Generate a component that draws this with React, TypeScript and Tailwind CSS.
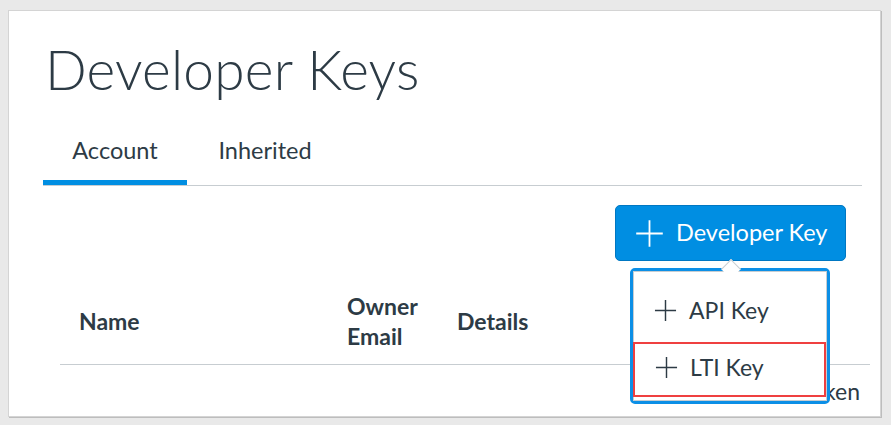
import React from "react";

const Plus = ({ size, stroke, className }: { size: number; stroke: string; className?: string }) => (
  <svg width={size} height={size} viewBox="0 0 24 24" className={className}>
    <path d="M12 1 V23 M1 12 H23" stroke={stroke} strokeWidth={1.5} fill="none" />
  </svg>
);

export default function App() {
  return (
    <div className="w-[891px] h-[425px] bg-[#e9e9e9] pt-[10px] pl-[8px] overflow-hidden" style={{ fontFamily: "Lato, 'Noto Sans', sans-serif" }}>
      <div className="relative w-[873px] h-[407px] bg-white border border-[#d4d4d4] shadow-[1px_1px_0_#bdbdbd] overflow-hidden text-[#2d3b45]">
        <h1 className="ml-[36px] mt-[26px] text-[55px] leading-[64px] font-light tracking-[0.2px]">Developer Keys</h1>
        <div className="ml-[34px] mr-[18px] mt-[30px] flex border-b border-[#c7cdd1]">
          <div className="w-[144px] h-[54px] flex justify-center pt-[5px] text-[23.5px] leading-[28px] border-b-[5px] border-[#008ee2] mb-[-1px]">Account</div>
          <div className="w-[156px] h-[54px] flex justify-center pt-[5px] text-[23.5px] leading-[28px]">Inherited</div>
        </div>
        <div className="flex justify-end mr-[34px] mt-[19px]">
          <button className="h-[56px] w-[231px] rounded-[5px] bg-[#008ee2] border border-[#0077c2] text-white flex items-center pl-[19px] gap-[12px] text-[23.5px]">
            <Plus size={29} stroke="#ffffff" />
            <span>Developer Key</span>
          </button>
        </div>
        <div className="ml-[51px] mr-[10px] mt-[30px] border-b border-[#c7cdd1] h-[74px] flex items-center pb-[14px] text-[23px] font-bold leading-[30px]">
          <div className="w-[287px] pl-[19px]">Name</div>
          <div className="w-[110px]">Owner<br />Email</div>
          <div>Details</div>
        </div>
        <div className="flex justify-end mr-[20px] mt-[14px] text-[23px] leading-[24px]">Access Token</div>

        {/* dropdown */}
        <div className="absolute left-[621px] top-[257px] w-[200px] h-[136px] rounded-[5px] border-[3px] border-[#0c8fe6] bg-white">
          <div className="absolute inset-0 border border-[#c7cdd1] flex flex-col pt-[6px]">
            <div className="h-[64px] flex items-center pl-[20px] gap-[12px] text-[23px]">
              <Plus size={23} stroke="#2d3b45" />
              <span>API Key</span>
            </div>
            <div className="h-[55px] flex items-center pb-[4px] pl-[20px] gap-[12px] text-[23px] border-2 border-[#ef4040] -ml-[1px]">
              <Plus size={23} stroke="#2d3b45" />
              <span>LTI Key</span>
            </div>
          </div>
        </div>
        {/* caret */}
        <div className="absolute left-[715px] top-[251px] w-[14px] h-[14px] bg-white border-l border-t border-[#c7cdd1] rotate-45"></div>
      </div>
    </div>
  );
}
